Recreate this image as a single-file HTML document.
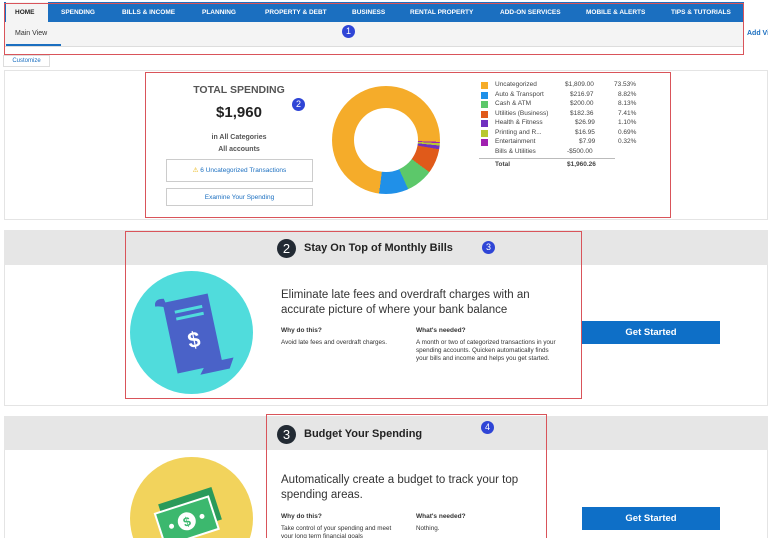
<!DOCTYPE html>
<html><head><meta charset="utf-8"><style>
*{margin:0;padding:0;box-sizing:border-box}
html,body{width:768px;height:538px;overflow:hidden}
body{background:#fff;font-family:"Liberation Sans",sans-serif;color:#333}
#w{position:relative;width:768px;height:538px;overflow:hidden}
.a{position:absolute}
.nav{left:4px;top:2px;width:740px;height:20px;background:#1b6fc0}
.nav span{position:absolute;top:7px;color:#fff;font-size:6.5px;font-weight:bold;white-space:nowrap}
.red{position:absolute;border:1px solid #d9545a}
.badge{position:absolute;width:13px;height:13px;border-radius:50%;background:#2f45d6;color:#fff;font-size:9px;text-align:center;line-height:13px}
.num{position:absolute;width:19px;height:19px;border-radius:50%;background:#222a33;color:#fff;font-size:13px;text-align:center;line-height:19px}
.gs{position:absolute;left:582px;width:138px;height:23px;background:#0e6fc7;color:#fff;font-size:9.5px;font-weight:bold;text-align:center;line-height:23px}
.h4{font-size:6.5px;font-weight:bold;color:#333}
.p{font-size:6.3px;color:#333;line-height:8px}
.lg div{position:absolute;font-size:6.5px;color:#444;white-space:nowrap}
.sq{width:7px;height:7px}
</style></head><body><div id="w">
<div class="a nav">
<div class="a" style="left:2px;top:0;width:42px;height:20px;background:#f4f4f4"></div>
<span style="left:11px;color:#222">HOME</span>
<span style="left:57px">SPENDING</span>
<span style="left:118px">BILLS &amp; INCOME</span>
<span style="left:198px">PLANNING</span>
<span style="left:261px">PROPERTY &amp; DEBT</span>
<span style="left:348px">BUSINESS</span>
<span style="left:406px">RENTAL PROPERTY</span>
<span style="left:496px">ADD-ON SERVICES</span>
<span style="left:582px">MOBILE &amp; ALERTS</span>
<span style="left:667px">TIPS &amp; TUTORIALS</span>
</div>
<div class="a" style="left:4px;top:22px;width:740px;height:25px;background:#f4f4f4;border-bottom:1px solid #ddd"></div>
<div class="a" style="left:15px;top:30px;font-size:7px;color:#333">Main View</div>
<div class="a" style="left:6px;top:44px;width:55px;height:2px;background:#1b6fc0"></div>
<div class="a" style="left:747px;top:30px;font-size:7px;color:#1b6fc0;font-weight:bold;white-space:nowrap">Add Vi</div>
<div class="red" style="left:4px;top:3px;width:740px;height:52px"></div>
<div class="badge" style="left:342px;top:25px">1</div>
<div class="a" style="left:3px;top:55px;width:47px;height:12px;border:1px solid #ddd;background:#fff;font-size:6px;color:#1b6fc0;text-align:center;line-height:10px">Customize</div>

<div class="a" style="left:4px;top:70px;width:764px;height:150px;border:1px solid #e4e4e4;background:#fff"></div>
<div class="red" style="left:145px;top:72px;width:526px;height:146px"></div>
<div class="a" style="left:165px;top:84px;width:148px;text-align:center;font-size:10.5px;font-weight:bold;color:#555">TOTAL SPENDING</div>
<div class="a" style="left:165px;top:104px;width:148px;text-align:center;font-size:15px;font-weight:bold;color:#222">$1,960</div>
<div class="badge" style="left:292px;top:98px">2</div>
<div class="a" style="left:165px;top:132px;width:148px;text-align:center;font-size:7px;font-weight:bold;color:#555;line-height:12px">in All Categories<br>All accounts</div>
<div class="a" style="left:166px;top:159px;width:147px;height:23px;border:1px solid #ccc;text-align:center;line-height:22px;font-size:6.5px;color:#1b6fc0"><span style="color:#e8b000">⚠</span> 6 Uncategorized Transactions</div>
<div class="a" style="left:166px;top:188px;width:147px;height:18px;border:1px solid #ccc;text-align:center;line-height:17px;font-size:6.5px;color:#1b6fc0">Examine Your Spending</div>
<div class="a" style="left:332px;top:86px;width:108px;height:108px;border-radius:50%;background:conic-gradient(from 92deg,#a020b0 0 0.4%,#b8c830 0.4% 1.1%,#7030c0 1.1% 2.2%,#e05a1a 2.2% 9.6%,#5cc86a 9.6% 17.7%,#2090e8 17.7% 26.5%,#f5ac2a 26.5% 100%)"></div>
<div class="a" style="left:354px;top:108px;width:64px;height:64px;border-radius:50%;background:#fff"></div>
<div class="lg">
<div class="sq" style="left:481px;top:82px;background:#f5ac2a"></div><div style="left:495px;top:81px">Uncategorized</div><div style="left:565px;top:81px">$1,809.00</div><div style="left:614px;top:81px">73.53%</div>
<div class="sq" style="left:481px;top:92px;background:#2090e8"></div><div style="left:495px;top:91px">Auto &amp; Transport</div><div style="left:570px;top:91px">$216.97</div><div style="left:618px;top:91px">8.82%</div>
<div class="sq" style="left:481px;top:101px;background:#5cc86a"></div><div style="left:495px;top:100px">Cash &amp; ATM</div><div style="left:570px;top:100px">$200.00</div><div style="left:618px;top:100px">8.13%</div>
<div class="sq" style="left:481px;top:111px;background:#e05a1a"></div><div style="left:495px;top:110px">Utilities (Business)</div><div style="left:570px;top:110px">$182.36</div><div style="left:618px;top:110px">7.41%</div>
<div class="sq" style="left:481px;top:120px;background:#7030c0"></div><div style="left:495px;top:119px">Health &amp; Fitness</div><div style="left:575px;top:119px">$26.99</div><div style="left:618px;top:119px">1.10%</div>
<div class="sq" style="left:481px;top:130px;background:#b8c830"></div><div style="left:495px;top:129px">Printing and R...</div><div style="left:575px;top:129px">$16.95</div><div style="left:618px;top:129px">0.69%</div>
<div class="sq" style="left:481px;top:139px;background:#a020b0"></div><div style="left:495px;top:138px">Entertainment</div><div style="left:579px;top:138px">$7.99</div><div style="left:618px;top:138px">0.32%</div>
<div style="left:495px;top:148px">Bills &amp; Utilities</div><div style="left:567px;top:148px">-$500.00</div>
<div style="left:479px;top:158px;width:136px;height:1px;background:#bbb"></div>
<div style="left:495px;top:161px;font-weight:bold">Total</div><div style="left:567px;top:161px;font-weight:bold">$1,960.26</div>
</div>

<div class="a" style="left:4px;top:230px;width:764px;height:176px;border:1px solid #e4e4e4;background:#fff"></div>
<div class="a" style="left:4px;top:230px;width:764px;height:35px;background:#e6e6e6"></div>
<div class="num" style="left:277px;top:239px">2</div>
<div class="a" style="left:304px;top:242px;font-size:11px;font-weight:bold;color:#222">Stay On Top of Monthly Bills</div>
<div class="badge" style="left:482px;top:241px">3</div>
<div class="red" style="left:125px;top:231px;width:457px;height:168px"></div>
<div class="a" style="left:130px;top:271px;width:123px;height:123px;border-radius:50%;background:#50dcdc"></div>
<svg class="a" style="left:140px;top:285px" width="110" height="100" viewBox="0 0 110 100">
<g transform="rotate(-12 55 50)"><rect x="30" y="12" width="46" height="72" fill="#4a62c8"/>
<path d="M22 14 q0 -8 10 -6 l2 10 q-8 -4 -12 -4z" fill="#4a62c8"/>
<path d="M60 80 h28 l-6 10 h-30z" fill="#4a62c8"/>
<rect x="40" y="22" width="28" height="3" fill="#50dcdc"/><rect x="40" y="29" width="28" height="3" fill="#50dcdc"/>
<text x="53" y="62" fill="#fff" font-size="22" font-weight="bold" font-family="Liberation Sans" text-anchor="middle">$</text></g></svg>
<div class="a" style="left:281px;top:288px;font-size:11.5px;line-height:15px;color:#333;width:290px">Eliminate late fees and overdraft charges with an accurate picture of where your bank balance</div>
<div class="a h4" style="left:281px;top:327px">Why do this?</div>
<div class="a p" style="left:281px;top:339px">Avoid late fees and overdraft charges.</div>
<div class="a h4" style="left:416px;top:327px">What's needed?</div>
<div class="a p" style="left:416px;top:339px;width:140px">A month or two of categorized transactions in your spending accounts. Quicken automatically finds your bills and income and helps you get started.</div>
<div class="gs" style="top:321px">Get Started</div>

<div class="a" style="left:4px;top:416px;width:764px;height:122px;border:1px solid #e4e4e4;border-bottom:none;background:#fff"></div>
<div class="a" style="left:4px;top:416px;width:764px;height:34px;background:#e6e6e6"></div>
<div class="num" style="left:277px;top:425px">3</div>
<div class="a" style="left:304px;top:428px;font-size:11px;font-weight:bold;color:#222">Budget Your Spending</div>
<div class="badge" style="left:481px;top:421px">4</div>
<div class="red" style="left:266px;top:414px;width:281px;height:124px;border-bottom:none"></div>
<div class="a" style="left:130px;top:457px;width:123px;height:81px;overflow:hidden"><div style="width:123px;height:123px;border-radius:50%;background:#f2d35c"></div></div>
<svg class="a" style="left:145px;top:485px" width="90" height="53" viewBox="0 0 90 53">
<g transform="rotate(-18 45 30)"><rect x="18" y="10" width="56" height="34" fill="#2a9a5a"/><rect x="12" y="18" width="56" height="34" fill="#3cb86e" stroke="#fff" stroke-width="2"/>
<circle cx="40" cy="35" r="9" fill="#fff"/><text x="40" y="40" font-size="13" font-weight="bold" fill="#3cb86e" text-anchor="middle" font-family="Liberation Sans">$</text>
<circle cx="24" cy="35" r="2.5" fill="#fff"/><circle cx="56" cy="35" r="2.5" fill="#fff"/></g></svg>
<div class="a" style="left:281px;top:473px;font-size:11.5px;line-height:15px;color:#333;width:260px">Automatically create a budget to track your top spending areas.</div>
<div class="a h4" style="left:281px;top:513px">Why do this?</div>
<div class="a p" style="left:281px;top:525px;width:120px;height:13px;overflow:hidden">Take control of your spending and meet your long term financial goals</div>
<div class="a h4" style="left:416px;top:513px">What's needed?</div>
<div class="a p" style="left:416px;top:525px">Nothing.</div>
<div class="gs" style="top:507px">Get Started</div>
</div></body></html>
